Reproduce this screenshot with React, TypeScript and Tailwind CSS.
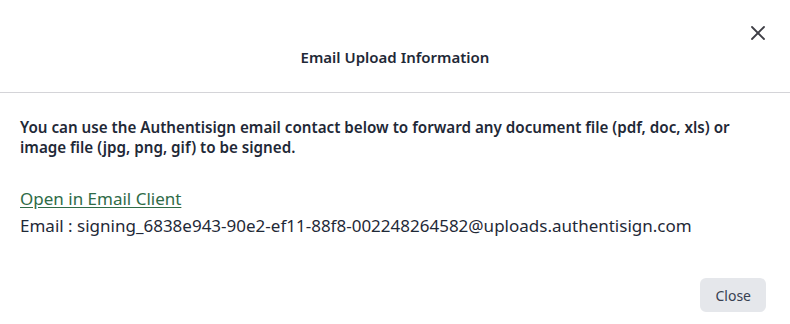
import React from 'react'

function CloseIcon() {
  return (
    <svg width="16" height="16" viewBox="0 0 16 16" fill="none" stroke="#3f3f46" strokeWidth="1.8" strokeLinecap="round">
      <path d="M2 2 L14 14" />
      <path d="M14 2 L2 14" />
    </svg>
  )
}

export default function App() {
  return (
    <div className="w-[790px] h-[324px] bg-white text-[#1f2937] flex flex-col" style={{ fontFamily: '"Noto Sans", "Open Sans", sans-serif' }}>
      <div className="relative h-[93px] border-b border-[#d4d4d8] flex items-center justify-center">
        <div className="text-[15px] font-semibold text-[#1f2937] pt-[23px]">Email Upload Information</div>
        <button className="absolute right-[24px] top-[25px] p-0">
          <CloseIcon />
        </button>
      </div>
      <div className="px-[20px] pt-[24px]">
        <p className="text-[15.2px] font-semibold leading-[20px] text-[#1f2937]">
          You can use the Authentisign email contact below to forward any document file (pdf, doc, xls) or image file (jpg, png, gif) to be signed.
        </p>
        <a href="#" className="block mt-[30px] text-[17px] leading-[24px] text-[#2f6b47] underline underline-offset-2">Open in Email Client</a>
        <div className="text-[17px] leading-[24px] text-[#1f2937] mt-[3px]">Email : signing_6838e943-90e2-ef11-88f8-002248264582@uploads.authentisign.com</div>
      </div>
      <div className="flex justify-end px-[24px] mt-auto pb-[12px]">
        <button className="h-[34px] px-[15px] rounded-[6px] bg-[#e5e7eb] text-[14px] text-[#374151]">Close</button>
      </div>
    </div>
  )
}
